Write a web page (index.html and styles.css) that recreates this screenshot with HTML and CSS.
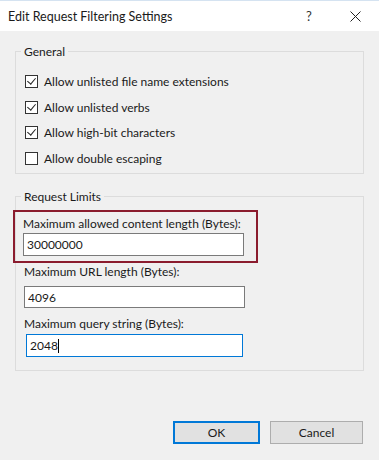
FILE: index.html
```html
<!DOCTYPE html>
<html lang="en">
  <head>
    <meta charset="UTF-8" />
    <meta name="viewport" content="width=device-width, initial-scale=1.0" />
    <title>Edit Request Filtering Settings</title>
    <link rel="stylesheet" href="styles.css">
  </head>
  <body>
    <div id="titlebar">
      <span class="title">Edit Request Filtering Settings</span>
      <span class="title-btn help">?</span>
      <span class="title-btn close">
        <svg width="11" height="11" viewBox="0 0 11 11">
          <path d="M0.5 0.5 L10.5 10.5 M10.5 0.5 L0.5 10.5" stroke="#222" stroke-width="1" fill="none" />
        </svg>
      </span>
    </div>

    <div id="content">
      <fieldset class="group" id="general">
        <legend>General</legend>
        <label class="check-row"><span class="check on"></span>Allow unlisted file name extensions</label>
        <label class="check-row"><span class="check on"></span>Allow unlisted verbs</label>
        <label class="check-row"><span class="check on"></span>Allow high-bit characters</label>
        <label class="check-row"><span class="check"></span>Allow double escaping</label>
      </fieldset>

      <fieldset class="group" id="limits">
        <legend>Request Limits</legend>
        <div class="highlight">
          <div class="field-label">Maximum allowed content length (Bytes):</div>
          <input type="text" class="field" value="30000000" />
        </div>
        <div class="field-label url-label">Maximum URL length (Bytes):</div>
        <input type="text" class="field" value="4096" />
        <div class="field-label query-label">Maximum query string (Bytes):</div>
        <div class="field focused">2048<span class="caret"></span></div>
      </fieldset>

      <div class="buttons">
        <button type="button" class="btn default">OK</button>
        <button type="button" class="btn">Cancel</button>
      </div>
    </div>
  </body>
</html>
```

FILE: styles.css
```css
body {
  margin: 0;
  width: 379px;
  height: 460px;
  background-color: #f0f0f0;
  font-family: Lato, "Noto Sans", sans-serif;
  font-size: 12px;
  color: #1a1a1a;
  overflow: hidden;
}

#titlebar {
  height: 31px;
  background-color: #fff;
  border-top: 1px solid #d5e3f1;
  box-sizing: border-box;
  display: flex;
  align-items: center;
  padding-left: 8px;
}
#titlebar .title {
  flex: 1;
  font-size: 12.5px;
}
.title-btn {
  display: flex;
  justify-content: center;
  align-items: center;
  width: 46px;
}
.help {
  font-size: 13px;
  color: #333;
}
.close {
  margin-right: 1px;
}

#content {
  padding: 0 15px 0 15px;
}

.group {
  margin: 0;
  border: 1px solid #dcdcdc;
  padding: 0;
}
.group legend {
  margin-left: 5px;
  padding: 0 3px;
  line-height: 17px;
}

#general {
  margin-top: 12px;
  padding: 9px 0 10px 0;
  height: 110px;
}
.check-row {
  display: flex;
  align-items: center;
  height: 25.5px;
  margin-left: 9px;
  white-space: nowrap;
}
.check {
  width: 11px;
  height: 11px;
  border: 1px solid #333;
  background-color: #fff;
  margin-right: 6px;
  position: relative;
}
.check.on::after {
  content: "";
  position: absolute;
  left: 3px;
  top: 0px;
  width: 4px;
  height: 7px;
  border-right: 1px solid #222;
  border-bottom: 1px solid #222;
  transform: rotate(40deg);
}

#limits {
  margin-top: 14px;
  padding: 0 0 19px 0;
  height: 162px;
}
.highlight {
  border: 2px solid #8b1c2e;
  margin-left: -3px;
  width: 225px;
  padding: 3px 8px 5px 8px;
  margin-top: 5px;
}
.field-label {
  line-height: 17px;
  white-space: nowrap;
}
.field {
  display: block;
  box-sizing: border-box;
  width: 221px;
  height: 23px;
  margin: 1px 0 0 0;
  border: 1px solid #7a7a7a;
  background-color: #fff;
  font-family: inherit;
  font-size: 12px;
  color: #1a1a1a;
  padding: 0 3px;
  outline: none;
}
.url-label {
  margin-left: 8px;
}
#limits > input.field {
  margin: 6px 0 0 8px;
  height: 22px;
}
.query-label {
  margin: 7px 0 0 8px;
}
.field.focused {
  margin: 2px 0 0 10px;
  width: 217px;
  border-color: #0078d7;
  display: flex;
  align-items: center;
}
.caret {
  display: inline-block;
  width: 1px;
  height: 14px;
  background-color: #000;
}

.buttons {
  display: flex;
  justify-content: flex-end;
  gap: 10px;
  margin-top: 50px;
  padding-right: 1px;
}
.btn {
  box-sizing: border-box;
  height: 23px;
  width: 93px;
  background-color: #e1e1e1;
  border: 1px solid #adadad;
  font-family: inherit;
  font-size: 12px;
  color: #1a1a1a;
  padding: 0;
}
.btn.default {
  width: 87px;
  border: 2px solid #0078d7;
}
```
